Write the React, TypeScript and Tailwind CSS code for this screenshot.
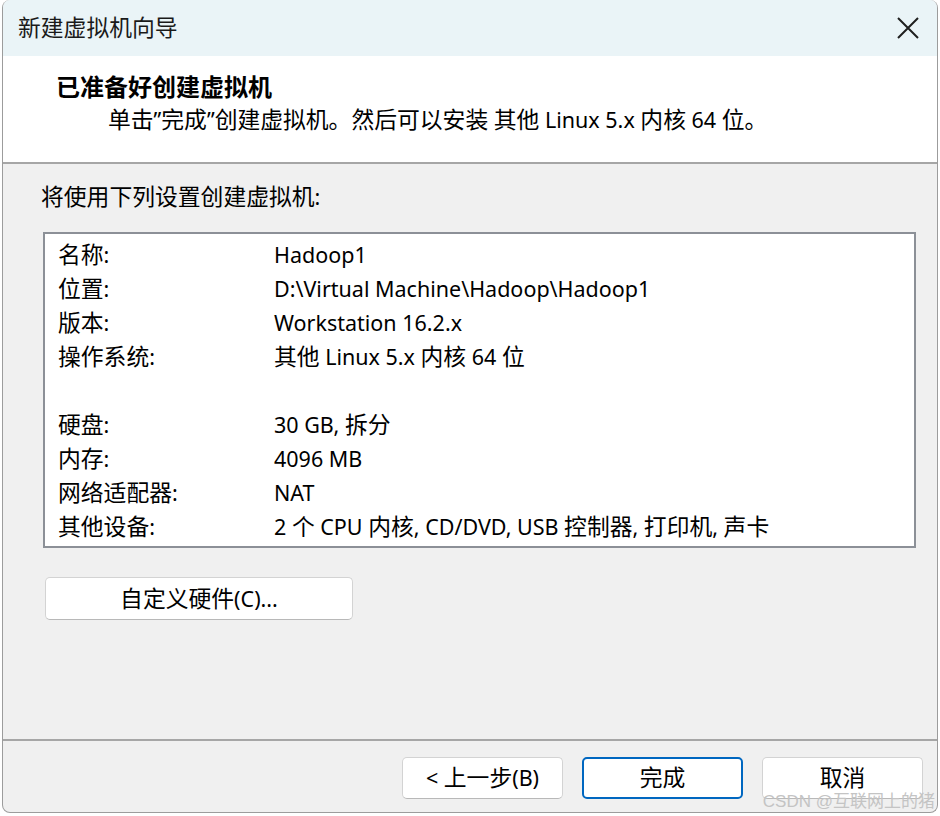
import React from "react";

function T({ s, cjk = "text-[22.8px]" }: { s: string; cjk?: string }) {
  const parts = s.split(/([\u3000-\u303f\u4e00-\u9fff\uff00-\uffef]+)/);
  return (
    <span>
      {parts.map((p, i) =>
        /[\u3000-\u303f\u4e00-\u9fff\uff00-\uffef]/.test(p) ? (
          <span key={i} className={cjk}>
            {p}
          </span>
        ) : (
          <span key={i}>{p}</span>
        )
      )}
    </span>
  );
}

const rows: [string, string][] = [
  ["名称:", "Hadoop1"],
  ["位置:", "D:\\Virtual Machine\\Hadoop\\Hadoop1"],
  ["版本:", "Workstation 16.2.x"],
  ["操作系统:", "其他 Linux 5.x 内核 64 位"],
  ["", ""],
  ["硬盘:", "30 GB, 拆分"],
  ["内存:", "4096 MB"],
  ["网络适配器:", "NAT"],
  ["其他设备:", "2 个 CPU 内核, CD/DVD, USB 控制器, 打印机, 声卡"],
];

export default function App() {
  return (
    <div className="relative w-[940px] h-[816px] bg-white pl-[2px] pr-[2px] pb-[3px] font-['Noto_Sans','Noto_Sans_CJK_SC',sans-serif] text-[21.5px] text-black">
      <div className="h-full flex flex-col border border-[#9c9c9c] border-t-0 rounded-[8px] overflow-hidden bg-[#f0f0f0]">
        {/* title bar */}
        <div className="h-[56px] shrink-0 bg-[#eaf4f7] flex items-center justify-between pl-[15px] pr-[16px]">
          <span className="leading-[28px] text-[#1a1a1a]">
            <T s="新建虚拟机向导" />
          </span>
          <svg width="26" height="26" viewBox="0 0 26 26" className="text-[#1f1f1f]">
            <path d="M3 3 L23 23 M23 3 L3 23" stroke="currentColor" strokeWidth="2" fill="none" />
          </svg>
        </div>
        {/* header */}
        <div className="h-[108px] shrink-0 bg-white border-b-2 border-[#a6a6a6] pl-[53px] pt-[17px]">
          <div className="leading-[28px] h-[28px] font-bold">
            <T s="已准备好创建虚拟机" cjk="text-[24px]" />
          </div>
          <div className="leading-[28px] h-[28px] mt-[5px] pl-[52px]">
            <T s={"单击\u201d完成\u201d创建虚拟机。然后可以安装 其他 Linux 5.x 内核 64 位。"} />
          </div>
        </div>
        {/* body */}
        <div className="flex-1 pl-[38px] pr-[21px] pt-[19px]">
          <div className="leading-[28px] h-[28px]">
            <T s="将使用下列设置创建虚拟机:" />
          </div>
          <div className="mt-[21px] ml-[2px] h-[316px] bg-white border-2 border-[#8c9097] pt-[4px] pl-[13px]">
            {rows.map(([k, v], i) => (
              <div key={i} className="flex h-[34px] items-center leading-[28px]">
                <span className="w-[216px] shrink-0">
                  <T s={k} />
                </span>
                <span>
                  <T s={v} />
                </span>
              </div>
            ))}
          </div>
          <button className="mt-[29px] ml-[4px] w-[308px] h-[43px] rounded-[5px] bg-white border border-[#d3d3d3] border-b-[#b8b8b8] leading-[28px] flex items-center justify-center">
            <T s="自定义硬件(C)..." />
          </button>
        </div>
        {/* footer */}
        <div className="h-[73px] shrink-0 border-t-2 border-[#a6a6a6] flex justify-end gap-[19px] pt-[16px] pr-[14px]">
          <button className="w-[161px] h-[42px] rounded-[5px] bg-white border border-[#d3d3d3] border-b-[#b8b8b8] leading-[28px] flex items-center justify-center">
            <T s="< 上一步(B)" />
          </button>
          <button className="w-[161px] h-[42px] rounded-[5px] bg-white border-2 border-[#0067c0] leading-[28px] flex items-center justify-center">
            <T s="完成" />
          </button>
          <button className="w-[161px] h-[42px] rounded-[5px] bg-white border border-[#d3d3d3] border-b-[#b8b8b8] leading-[28px] flex items-center justify-center">
            <T s="取消" />
          </button>
        </div>
      </div>
      <div className="absolute right-[5px] bottom-[4px] text-[17px] leading-[20px] text-[#c4c4c4] font-['Liberation_Sans','Noto_Sans_CJK_SC',sans-serif]">
        CSDN @互联网上的猪
      </div>
    </div>
  );
}
